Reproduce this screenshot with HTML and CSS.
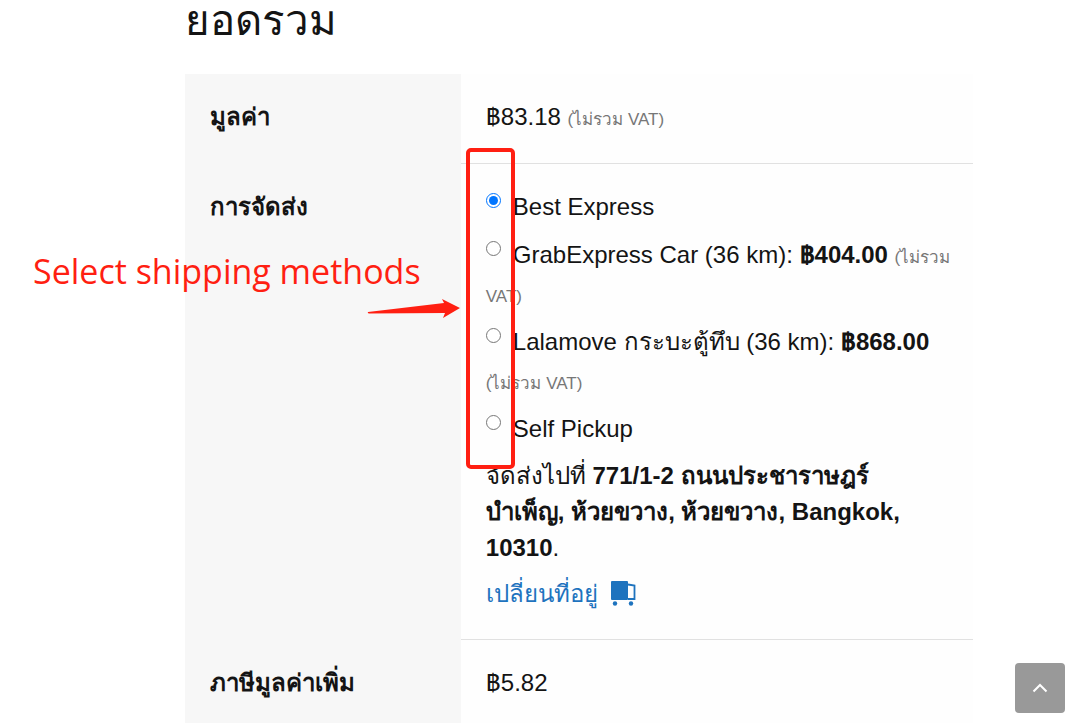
FILE: index.html
```html
<!DOCTYPE html>
<html lang="th">
<head>
  <meta charset="UTF-8">
  <meta name="viewport" content="width=device-width, initial-scale=1.0">
  <title>ยอดรวม</title>
  <link rel="stylesheet" href="styles.css">
</head>
<body>

<main class="cart-totals">
  <h2>ยอดรวม</h2>

  <table class="totals">
    <tr>
      <th scope="row">มูลค่า</th>
      <td>฿83.18 <small><span class="keep">(ไม่รวม</span> VAT)</small></td>
    </tr>
    <tr>
      <th scope="row">การจัดส่ง</th>
      <td>
        <ul class="methods">
          <li><input type="radio" name="shipping" id="ship1" checked><label for="ship1">Best Express</label></li>
          <li><input type="radio" name="shipping" id="ship2"><label for="ship2">GrabExpress Car (36 km): <b>฿404.00</b> <small><span class="keep">(ไม่รวม</span> VAT)</small></label></li>
          <li><input type="radio" name="shipping" id="ship3"><label for="ship3">Lalamove กระบะตู้ทึบ (36 km): <b>฿868.00</b> <small><span class="keep">(ไม่รวม</span> VAT)</small></label></li>
          <li><input type="radio" name="shipping" id="ship4"><label for="ship4">Self Pickup</label></li>
        </ul>
        <p class="destination">จัดส่งไปที่ <b>771/1-2 ถนนประชาราษฎร์<br>บำเพ็ญ, ห้วยขวาง, ห้วยขวาง, Bangkok, 10310</b>.</p>
        <a class="change" href="#">เปลี่ยนที่อยู่
          <svg class="truck" viewBox="0 0 26 26" width="26" height="26" aria-hidden="true">
            <rect x="0" y="0" width="17" height="19" rx="1" fill="currentColor"/>
            <path d="M17 3.500l6.500 1V18H17" fill="none" stroke="currentColor" stroke-width="1.800"/>
            <circle cx="4" cy="22.500" r="2.200" fill="currentColor"/>
            <circle cx="20" cy="22.500" r="2.200" fill="currentColor"/>
          </svg>
        </a>
      </td>
    </tr>
    <tr>
      <th scope="row">ภาษีมูลค่าเพิ่ม</th>
      <td>฿5.82</td>
    </tr>
  </table>

  <!-- callout over the shipping options -->
  <div class="note-box"></div>
  <div class="note-text">Select shipping methods</div>
  <svg class="note-arrow" viewBox="0 0 94 20" width="94" height="20" aria-hidden="true">
    <path d="M1 13L77 4L75 0L93 9L76 19L78 14L2 14.500Q0 14 1 13Z" fill="#ff1f12"/>
  </svg>
</main>

<button class="to-top" type="button" aria-label="Back to top">
  <svg viewBox="0 0 16 10" width="16" height="10" aria-hidden="true">
    <path d="M1.500 8.500L8 2l6.500 6.500" fill="none" stroke="#fff" stroke-width="2"/>
  </svg>
</button>

</body>
</html>
```

FILE: styles.css
```css
body {
  margin: 0;
  overflow: hidden;
  background: #fff;
  color: #141414;
  font-family: "Liberation Sans", Arial, sans-serif;
  font-size: 24px;
}
.cart-totals {
  position: relative;
  margin: 0 111px 0 185px;
}
h2 {
  margin: 0;
  padding-bottom: 32px;
  font-size: 42px;
  font-weight: normal;
  line-height: 42px;
}
.totals {
  width: 100%;
  table-layout: fixed;
  border-collapse: separate;
  border-spacing: 0;
}
.totals th,
.totals td {
  padding: 23px 20px 27px 25px;
  line-height: 39px;
  text-align: left;
  vertical-align: top;
}
.totals th {
  width: 35%;
  box-sizing: border-box;
  background: #f7f7f7;
}
.totals td {
  border-bottom: 1px solid #e1e1e1;
  background: #fefefe;
}
small {
  color: #777;
  font-size: 17px;
  line-height: 1;
}
.keep {
  white-space: nowrap;
}
.methods {
  margin: 0 0 10px;
  padding: 0;
  list-style: none;
}
.methods li + li {
  margin-top: 9px;
}
.methods input {
  width: 15px;
  height: 15px;
  margin: 0 12px 0 0;
  vertical-align: 7px;
}
.destination {
  margin: 0 0 10px;
  line-height: 36px;
}
.change {
  display: flex;
  align-items: center;
  gap: 13px;
  color: #1e73be;
  line-height: 36px;
  text-decoration: none;
}
.note-box {
  position: absolute;
  top: 148px;
  left: 281px;
  width: 41px;
  height: 313px;
  border: 4px solid #ff1f12;
  border-radius: 5px;
}
.note-text {
  position: absolute;
  top: 247px;
  left: -152px;
  color: #ff1f12;
  font-family: "Open Sans", "Noto Sans", sans-serif;
  font-size: 34px;
  line-height: 48px;
  white-space: nowrap;
}
.note-arrow {
  position: absolute;
  top: 299px;
  left: 182px;
}
.to-top {
  position: fixed;
  right: 19px;
  bottom: 10px;
  display: flex;
  align-items: center;
  justify-content: center;
  width: 50px;
  height: 50px;
  padding: 0;
  border: 0;
  border-radius: 4px;
  background: #999;
  cursor: pointer;
}
```
